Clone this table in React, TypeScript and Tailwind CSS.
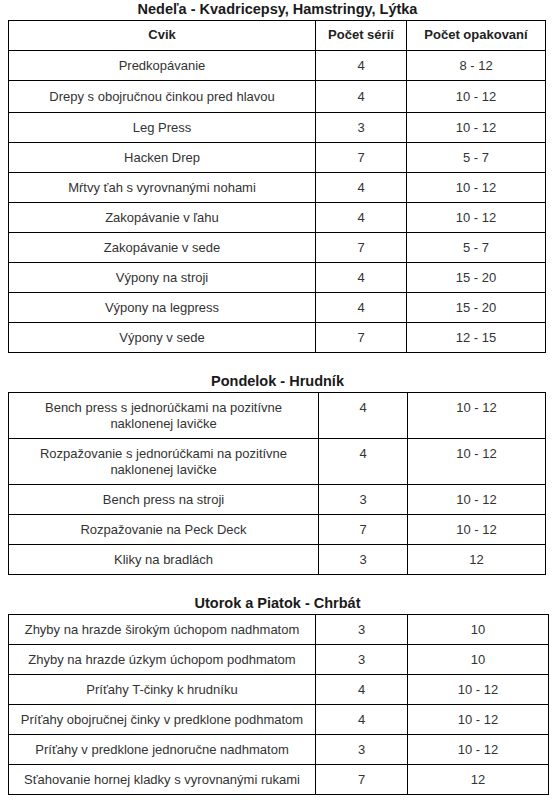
import React from "react";

type Row = { name: string[]; sets: string; reps: string; extra?: boolean };

const t1: Row[] = [
  { name: ["Predkopávanie"], sets: "4", reps: "8 - 12" },
  { name: ["Drepy s obojručnou činkou pred hlavou"], sets: "4", reps: "10 - 12", extra: true },
  { name: ["Leg Press"], sets: "3", reps: "10 - 12" },
  { name: ["Hacken Drep"], sets: "7", reps: "5 - 7" },
  { name: ["Mŕtvy ťah s vyrovnanými nohami"], sets: "4", reps: "10 - 12" },
  { name: ["Zakopávanie v ľahu"], sets: "4", reps: "10 - 12" },
  { name: ["Zakopávanie v sede"], sets: "7", reps: "5 - 7" },
  { name: ["Výpony na stroji"], sets: "4", reps: "15 - 20" },
  { name: ["Výpony na legpress"], sets: "4", reps: "15 - 20" },
  { name: ["Výpony v sede"], sets: "7", reps: "12 - 15" },
];

const t2: Row[] = [
  { name: ["Bench press s jednorúčkami na pozitívne", "naklonenej lavičke"], sets: "4", reps: "10 - 12" },
  { name: ["Rozpažovanie s jednorúčkami na pozitívne", "naklonenej lavičke"], sets: "4", reps: "10 - 12" },
  { name: ["Bench press na stroji"], sets: "3", reps: "10 - 12" },
  { name: ["Rozpažovanie na Peck Deck"], sets: "7", reps: "10 - 12" },
  { name: ["Kliky na bradlách"], sets: "3", reps: "12" },
];

const t3: Row[] = [
  { name: ["Zhyby na hrazde širokým úchopom nadhmatom"], sets: "3", reps: "10" },
  { name: ["Zhyby na hrazde úzkym úchopom podhmatom"], sets: "3", reps: "10" },
  { name: ["Príťahy T-činky k hrudníku"], sets: "4", reps: "10 - 12" },
  { name: ["Príťahy obojručnej činky v predklone podhmatom"], sets: "4", reps: "10 - 12" },
  { name: ["Príťahy v predklone jednoručne nadhmatom"], sets: "3", reps: "10 - 12" },
  { name: ["Sťahovanie hornej kladky s vyrovnanými rukami"], sets: "7", reps: "12" },
];

function Title({ text, first }: { text: string; first?: boolean }) {
  return (
    <div
      className={`h-[20px] leading-[18px] text-center text-[14.5px] font-bold text-[#1a1a1a] ${first ? "" : "mt-[19px]"}`}
    >
      {text}
    </div>
  );
}

function TableRow({ row, first, c1, c2 }: { row: Row; first?: boolean; c1: string; c2: string }) {
  const pad = row.extra ? "pt-[8px] pb-[7px]" : "pt-[7px] pb-[6px]";
  return (
    <div className={`flex ${first ? "" : "border-t border-black"}`}>
      <div className={`${c1} shrink-0 text-center ${pad}`}>
        {row.name.map((l, i) => (
          <div key={i}>{l}</div>
        ))}
      </div>
      <div className={`${c2} shrink-0 border-l border-black text-center ${pad}`}>{row.sets}</div>
      <div className={`flex-1 border-l border-black text-center ${pad}`}>{row.reps}</div>
    </div>
  );
}

function Table({ rows, header, w, c1, c2 }: { rows: Row[]; header?: boolean; w: string; c1: string; c2: string }) {
  return (
    <div className={`ml-[8px] ${w} border border-black`}>
      {header && (
        <div className="flex font-bold text-[#222]">
          <div className={`${c1} shrink-0 text-center pt-[6px] pb-[7px]`}>Cvik</div>
          <div className={`${c2} shrink-0 border-l border-black text-center pt-[6px] pb-[7px]`}>Počet sérií</div>
          <div className="flex-1 border-l border-black text-center pt-[6px] pb-[7px]">Počet opakovaní</div>
        </div>
      )}
      {rows.map((r, i) => (
        <TableRow key={i} row={r} first={!header && i === 0} c1={c1} c2={c2} />
      ))}
    </div>
  );
}

export default function App() {
  return (
    <div
      className="w-[555px] h-[800px] bg-white text-[13px] leading-[16px] text-[#333]"
      style={{ fontFamily: '"Liberation Sans", Arial, sans-serif' }}
    >
      <Title text="Nedeľa - Kvadricepsy, Hamstringy, Lýtka" first />
      <Table rows={t1} header w="w-[538px]" c1="w-[306px]" c2="w-[91px]" />
      <Title text="Pondelok - Hrudník" />
      <Table rows={t2} w="w-[538px]" c1="w-[309px]" c2="w-[89px]" />
      <Title text="Utorok a Piatok - Chrbát" />
      <Table rows={t3} w="w-[541px]" c1="w-[306px]" c2="w-[92px]" />
    </div>
  );
}
